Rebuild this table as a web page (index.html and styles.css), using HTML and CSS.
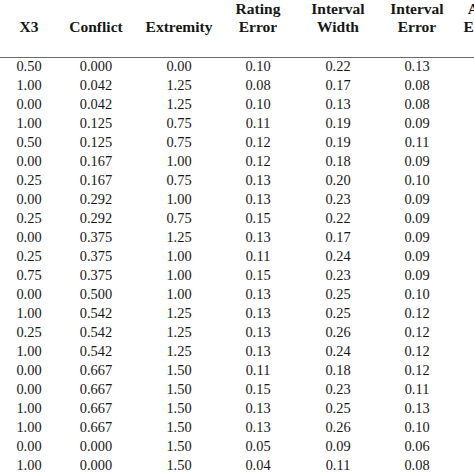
FILE: index.html
```html
<!DOCTYPE html>
<html>
<head>
<meta charset="utf-8">
<link rel="stylesheet" href="styles.css">
</head>
<body>
<table class="results">
  <colgroup>
    <col class="c1"><col class="c2"><col class="c3"><col class="c4"><col class="c5"><col class="c6"><col class="c7">
  </colgroup>
  <thead>
    <tr>
      <th>X3</th>
      <th>Conflict</th>
      <th>Extremity</th>
      <th>Rating<br>Error</th>
      <th>Interval<br>Width</th>
      <th>Interval<br>Error</th>
      <th>Absolute<br>Extremity</th>
    </tr>
  </thead>
  <tbody>
    <tr><td>0.50</td><td>0.000</td><td>0.00</td><td>0.10</td><td>0.22</td><td>0.13</td><td></td></tr>
    <tr><td>1.00</td><td>0.042</td><td>1.25</td><td>0.08</td><td>0.17</td><td>0.08</td><td></td></tr>
    <tr><td>0.00</td><td>0.042</td><td>1.25</td><td>0.10</td><td>0.13</td><td>0.08</td><td></td></tr>
    <tr><td>1.00</td><td>0.125</td><td>0.75</td><td>0.11</td><td>0.19</td><td>0.09</td><td></td></tr>
    <tr><td>0.50</td><td>0.125</td><td>0.75</td><td>0.12</td><td>0.19</td><td>0.11</td><td></td></tr>
    <tr><td>0.00</td><td>0.167</td><td>1.00</td><td>0.12</td><td>0.18</td><td>0.09</td><td></td></tr>
    <tr><td>0.25</td><td>0.167</td><td>0.75</td><td>0.13</td><td>0.20</td><td>0.10</td><td></td></tr>
    <tr><td>0.00</td><td>0.292</td><td>1.00</td><td>0.13</td><td>0.23</td><td>0.09</td><td></td></tr>
    <tr><td>0.25</td><td>0.292</td><td>0.75</td><td>0.15</td><td>0.22</td><td>0.09</td><td></td></tr>
    <tr><td>0.00</td><td>0.375</td><td>1.25</td><td>0.13</td><td>0.17</td><td>0.09</td><td></td></tr>
    <tr><td>0.25</td><td>0.375</td><td>1.00</td><td>0.11</td><td>0.24</td><td>0.09</td><td></td></tr>
    <tr><td>0.75</td><td>0.375</td><td>1.00</td><td>0.15</td><td>0.23</td><td>0.09</td><td></td></tr>
    <tr><td>0.00</td><td>0.500</td><td>1.00</td><td>0.13</td><td>0.25</td><td>0.10</td><td></td></tr>
    <tr><td>1.00</td><td>0.542</td><td>1.25</td><td>0.13</td><td>0.25</td><td>0.12</td><td></td></tr>
    <tr><td>0.25</td><td>0.542</td><td>1.25</td><td>0.13</td><td>0.26</td><td>0.12</td><td></td></tr>
    <tr><td>1.00</td><td>0.542</td><td>1.25</td><td>0.13</td><td>0.24</td><td>0.12</td><td></td></tr>
    <tr><td>0.00</td><td>0.667</td><td>1.50</td><td>0.11</td><td>0.18</td><td>0.12</td><td></td></tr>
    <tr><td>0.00</td><td>0.667</td><td>1.50</td><td>0.15</td><td>0.23</td><td>0.11</td><td></td></tr>
    <tr><td>1.00</td><td>0.667</td><td>1.50</td><td>0.13</td><td>0.25</td><td>0.13</td><td></td></tr>
    <tr><td>1.00</td><td>0.667</td><td>1.50</td><td>0.13</td><td>0.26</td><td>0.10</td><td></td></tr>
    <tr><td>0.00</td><td>0.000</td><td>1.50</td><td>0.05</td><td>0.09</td><td>0.06</td><td></td></tr>
    <tr><td>1.00</td><td>0.000</td><td>1.50</td><td>0.04</td><td>0.11</td><td>0.08</td><td></td></tr>
  </tbody>
</table>
</body>
</html>
```
FILE: styles.css
```css
html, body {
  margin: 0;
  padding: 0;
  background: #ffffff;
  overflow: hidden;
  width: 474px;
  height: 474px;
}

.results {
  border-collapse: collapse;
  border-spacing: 0;
  table-layout: fixed;
  width: 544px;
  font-family: "Liberation Serif", "Times New Roman", serif;
  color: #161616;
}

.c1 { width: 58px; }
.c2 { width: 76px; }
.c3 { width: 90px; }
.c4 { width: 68px; }
.c5 { width: 92px; }
.c6 { width: 66px; }
.c7 { width: 94px; }

.results th {
  font-size: 15.5px;
  font-weight: bold;
  line-height: 18px;
  text-align: center;
  vertical-align: bottom;
  padding: 0 0 21px 0;
  border-bottom: 1.5px solid #6a6a6a;
  white-space: nowrap;
}

.results td {
  font-size: 14.4px;
  line-height: 17px;
  text-align: center;
  padding: 0 0 2px 0;
  white-space: nowrap;
}
```
